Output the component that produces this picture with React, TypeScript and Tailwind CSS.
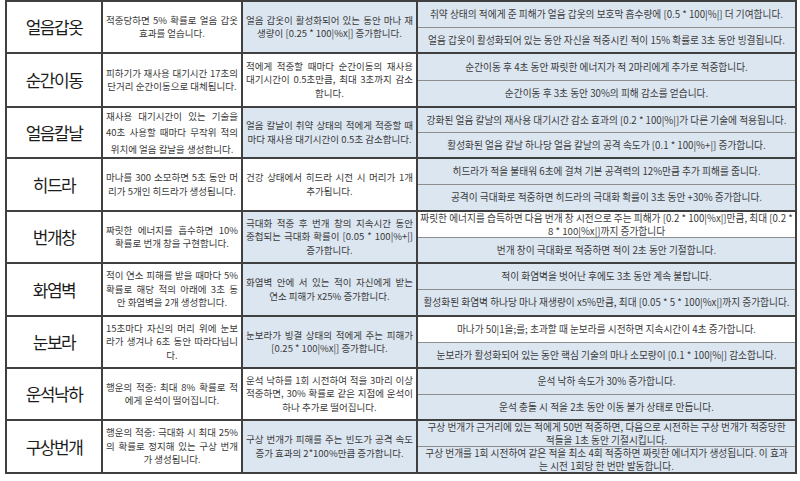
import React from 'react';

type Sub = { lines: string[]; white?: boolean };

interface Row {
  name: string;
  h: string;
  desc: string[];
  descLeading?: string;
  up: string[];
  upBlue: boolean;
  subs: Sub[];
}

// 엑셀 표의 줄바꿈을 그대로 옮기기 위해 줄 단위로 나눔
const rows: Row[] = [
  {
    name: '얼음갑옷',
    h: 'h-[52px]',
    desc: ['적중당하면 5% 확률로 얼음 갑옷', '효과를 얻습니다.'],
    up: ['얼음 갑옷이 활성화되어 있는 동안 마나 재', '생량이 [0.25 * 100|%x|] 증가합니다.'],
    upBlue: true,
    subs: [
      { lines: ['취약 상태의 적에게 준 피해가 얼음 갑옷의 보호막 흡수량에 [0.5 * 100|%|] 더 기여합니다.'] },
      { lines: ['얼음 갑옷이 활성화되어 있는 동안 자신을 적중시킨 적이 15% 확률로 3초 동안 빙결됩니다.'] },
    ],
  },
  {
    name: '순간이동',
    h: 'h-[54px]',
    desc: ['피하기가 재사용 대기시간 17초의', '단거리 순간이동으로 대체됩니다.'],
    up: ['적에게 적중할 때마다 순간이동의 재사용', '대기시간이 0.5초만큼, 최대 3초까지 감소', '합니다.'],
    upBlue: false,
    subs: [
      { lines: ['순간이동 후 4초 동안 짜릿한 에너지가 적 2마리에게 추가로 적중합니다.'] },
      { lines: ['순간이동 후 3초 동안 30%의 피해 감소를 얻습니다.'] },
    ],
  },
  {
    name: '얼음칼날',
    h: 'h-[51px]',
    desc: ['재사용 대기시간이 있는 기술을', '40초 사용할 때마다 무작위 적의', '위치에 얼음 칼날을 생성합니다.'],
    descLeading: 'leading-[16.5px]',
    up: ['얼음 칼날이 취약 상태의 적에게 적중할 때', '마다 재사용 대기시간이 0.5초 감소합니다.'],
    upBlue: true,
    subs: [
      { lines: ['강화된 얼음 칼날의 재사용 대기시간 감소 효과의 [0.2 * 100|%|]가 다른 기술에 적용됩니다.'] },
      { lines: ['활성화된 얼음 칼날 하나당 얼음 칼날의 공격 속도가 [0.1 * 100|%+|] 증가합니다.'] },
    ],
  },
  {
    name: '히드라',
    h: 'h-[53px]',
    desc: ['마나를 300 소모하면 5초 동안 머', '리가 5개인 히드라가 생성됩니다.'],
    up: ['건강 상태에서 히드라 시전 시 머리가 1개', '추가됩니다.'],
    upBlue: false,
    subs: [
      { lines: ['히드라가 적을 불태워 6초에 걸쳐 기본 공격력의 12%만큼 추가 피해를 줍니다.'] },
      { lines: ['공격이 극대화로 적중하면 히드라의 극대화 확률이 3초 동안 +30% 증가합니다.'] },
    ],
  },
  {
    name: '번개창',
    h: 'h-[52px]',
    desc: ['짜릿한 에너지를 흡수하면 10%', '확률로 번개 창을 구현합니다.'],
    up: ['극대화 적중 후 번개 창의 지속시간 동안', '중첩되는 극대화 확률이 [0.05 * 100|%+|]', '증가합니다.'],
    upBlue: true,
    subs: [
      {
        lines: [
          '짜릿한 에너지를 습득하면 다음 번개 창 시전으로 주는 피해가 [0.2 * 100|%x|]만큼, 최대 [0.2 *',
          '8 * 100|%x|]까지 증가합니다',
        ],
        white: true,
      },
      { lines: ['번개 창이 극대화로 적중하면 적이 2초 동안 기절합니다.'] },
    ],
  },
  {
    name: '화염벽',
    h: 'h-[53px]',
    desc: ['적이 연소 피해를 받을 때마다 5%', '확률로 해당 적의 아래에 3초 동', '안 화염벽을 2개 생성합니다.'],
    up: ['화염벽 안에 서 있는 적이 자신에게 받는', '연소 피해가 x25% 증가합니다.'],
    upBlue: true,
    subs: [
      { lines: ['적이 화염벽을 벗어난 후에도 3초 동안 계속 불탑니다.'] },
      { lines: ['활성화된 화염벽 하나당 마나 재생량이 x5%만큼, 최대 [0.05 * 5 * 100|%x|]까지 증가합니다.'] },
    ],
  },
  {
    name: '눈보라',
    h: 'h-[52px]',
    desc: ['15초마다 자신의 머리 위에 눈보', '라가 생겨나 6초 동안 따라다닙니', '다.'],
    up: ['눈보라가 빙결 상태의 적에게 주는 피해가', '[0.25 * 100|%x|] 증가합니다.'],
    upBlue: true,
    subs: [
      { lines: ['마나가 50|1을;를; 초과할 때 눈보라를 시전하면 지속시간이 4초 증가합니다.'], white: true },
      { lines: ['눈보라가 활성화되어 있는 동안 핵심 기술의 마나 소모량이 [0.1 * 100|%|] 감소합니다.'] },
    ],
  },
  {
    name: '운석낙하',
    h: 'h-[52px]',
    desc: ['행운의 적중: 최대 8% 확률로 적', '에게 운석이 떨어집니다.'],
    up: ['운석 낙하를 1회 시전하여 적을 3마리 이상', '적중하면, 30% 확률로 같은 지점에 운석이', '하나 추가로 떨어집니다.'],
    upBlue: false,
    subs: [
      { lines: ['운석 낙하 속도가 30% 증가합니다.'] },
      { lines: ['운석 충돌 시 적을 2초 동안 이동 불가 상태로 만듭니다.'] },
    ],
  },
  {
    name: '구상번개',
    h: 'h-[51px]',
    desc: ['행운의 적중: 극대화 시 최대 25%', '의 확률로 정지해 있는 구상 번개', '가 생성됩니다.'],
    up: ['구상 번개가 피해를 주는 빈도가 공격 속도', '증가 효과의 2*100%만큼 증가합니다.'],
    upBlue: true,
    subs: [
      {
        lines: [
          '구상 번개가 근거리에 있는 적에게 50번 적중하면, 다음으로 시전하는 구상 번개가 적중당한',
          '적들을 1초 동안 기절시킵니다.',
        ],
      },
      {
        lines: [
          '구상 번개를 1회 시전하여 같은 적을 최소 4회 적중하면 짜릿한 에너지가 생성됩니다. 이 효과',
          '는 시전 1회당 한 번만 발동합니다.',
        ],
      },
    ],
  },
];

const font = "font-['Noto_Sans_CJK_KR','Noto_Sans',sans-serif]";

// 양쪽 맞춤 + 마지막 줄 가운데 (엑셀 '균등 분할' 정렬 흉내)
function Distributed({ lines, leading }: { lines: string[]; leading: string }) {
  return (
    <div className={`w-full text-[9.5px] ${leading} text-[#3a3a3a]`}>
      {lines.map((l, k) =>
        k < lines.length - 1 ? (
          <span key={k} className="block whitespace-nowrap text-justify [text-align-last:justify]">
            {l}
          </span>
        ) : (
          <span key={k} className="block whitespace-nowrap text-center">
            {l}
          </span>
        )
      )}
    </div>
  );
}

export default function App() {
  return (
    <div className={`w-[800px] h-[481px] bg-white pl-[5px] ${font}`}>
      <div className="w-[792px] border-2 border-[#404040] flex flex-col">
        {rows.map((r, i) => (
          <div
            key={r.name}
            className={`flex ${r.h} ${i < rows.length - 1 ? 'border-b-2 border-[#404040]' : ''}`}
          >
            <div className="w-[96px] shrink-0 border-r-2 border-[#404040] bg-white flex items-center justify-center text-[17px] text-[#1c1c1c] tracking-[-1.5px]">
              {r.name}
            </div>
            <div className="w-[140px] shrink-0 border-r-2 border-[#404040] bg-white flex items-center px-[3px]">
              <Distributed lines={r.desc} leading={r.descLeading ?? 'leading-[13.5px]'} />
            </div>
            <div
              className={`w-[175px] shrink-0 border-r-2 border-[#404040] flex items-center px-[3px] ${
                r.upBlue ? 'bg-[#dce6f1]' : 'bg-white'
              }`}
            >
              <Distributed lines={r.up} leading="leading-[13.5px]" />
            </div>
            <div className="flex-1 flex flex-col">
              {r.subs.map((s, j) => (
                <div
                  key={j}
                  className={`flex-1 flex flex-col items-center justify-center px-[2px] ${
                    s.white ? 'bg-white' : 'bg-[#dce6f1]'
                  } ${j === 0 ? 'border-b border-[#8f8f8f]' : ''}`}
                >
                  {s.lines.map((l, k) => (
                    <span key={k} className="block whitespace-nowrap text-[9.7px] leading-[12.5px] text-[#3a3a3a]">
                      {l}
                    </span>
                  ))}
                </div>
              ))}
            </div>
          </div>
        ))}
      </div>
    </div>
  );
}
